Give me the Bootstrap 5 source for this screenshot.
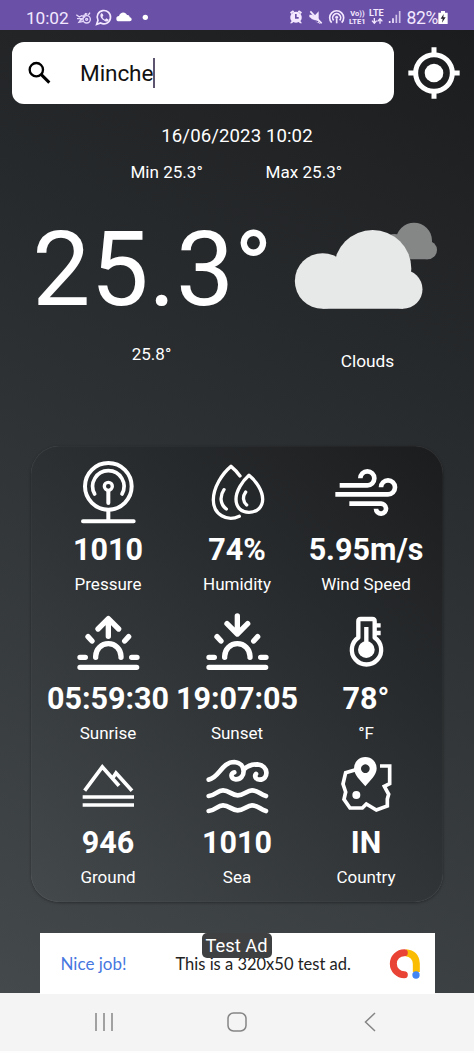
<!DOCTYPE html>
<html lang="en">
<head>
<meta charset="utf-8">
<meta name="viewport" content="width=device-width, initial-scale=1">
<title>Weather</title>
<link href="https://cdn.jsdelivr.net/npm/bootstrap@5.3.0/dist/css/bootstrap.min.css" rel="stylesheet">
<style>
body{font-family:Roboto,"Noto Sans",sans-serif;background:#fdfdfd;color:#fff;height:1053px;overflow:hidden}
svg{display:block;flex:none}
.status{height:30px;background:#6a50a7;padding:6px 25px 0 26px;color:#f3e8ff}
.clock{font-size:17.3px;line-height:24px;width:44px;white-space:nowrap;letter-spacing:-.1px}
.pct{font-size:17.5px;line-height:24px;white-space:nowrap;letter-spacing:-.3px}
.app{height:963px;background:linear-gradient(26deg,#44494c,#2d3133 52%,#1b1c1e)}
.topbar{padding:12px 14px 0 12px;height:74px}
.search{width:382px;height:62px;border-radius:12px;background:#fff;color:#111;padding-left:16px}
.query{font-size:22.6px;line-height:30px;margin-left:29px;padding-top:2px;letter-spacing:-.1px}
.caret{width:2px;height:30px;background:#5d5470}
.date{font-size:18.6px;line-height:28px;margin-top:18px;letter-spacing:.1px}
.range{font-size:17.1px;line-height:26px;margin-top:9px;padding:0 101.5px 0 98px}
.now{height:260px}
.reading{width:303px}
.temp{font-size:103.5px;line-height:110px;margin-top:30px;white-space:nowrap;padding-left:2px}
.feels{font-size:17px;line-height:26px;margin-top:16px}
.outlook{width:129px;padding-top:25px}
.outlook svg{margin-left:5px}
.sky{font-size:17.3px;line-height:26px;margin-top:28px}
.panel{width:412px;height:456px;margin:1px auto 0;padding:0 12px;border-radius:28px;background:linear-gradient(42deg,#44494c,#2d3133 52%,#1b1c1e);box-shadow:0 1px 3px rgba(0,0,0,.35),inset 0 0 1px rgba(255,255,255,.25)}
.cell{width:129px;flex:none}
.value{font-size:30.5px;font-weight:700;line-height:36px;white-space:nowrap}
.label{font-size:17px;line-height:28px;margin-top:2px}
.lower{padding-top:.7px}
.ln{fill:none;stroke:#fff;stroke-width:12;stroke-linecap:round;stroke-linejoin:round}
.ad{width:395px;height:61px;background:#fff;margin:31px auto 0;font-family:Lato,sans-serif;color:#222;padding:1px 14px 0 21px}
.adtag{top:0;left:162px;width:70px;height:25px;border-radius:5px;background:#3f4041;color:#fff;font:18.3px/25px Roboto,sans-serif;text-align:center;white-space:nowrap}
.nice{font-size:17px;line-height:20px;color:#4677df;width:115px}
.msg{font-size:16.5px;line-height:16px;white-space:nowrap}
.navkeys{height:58px;background:#f4f4f4;padding:0 71px 0 70px}
</style>
</head>
<body>
<div class="status d-flex">
  <div class="clock">10:02</div>
  <svg class="ms-1" width="90" height="24" viewBox="222 18 270 72">
    <g fill="none" stroke="#e5d8fa" stroke-width="4"><path d="M229 44l9 7 7-4 11 4M231 56h13l-7 11 13-3M242 62l12-13"/><circle cx="260" cy="58" r="11"/><circle cx="260" cy="58" r="3"/><path d="M250 47l12-6M265 45l5-7M258 43l-3-3"/></g>
    <path d="M290 73l4-12a20 20 0 1 1 8 8z" fill="none" stroke="#f3e8ff" stroke-width="5"/><path d="M303 41c3-3 6 2 7 6l-3 4q3 6 8 8l4-4 7 4c-2 9-10 6-16 1s-12-12-7-19" fill="#f3e8ff"/>
    <path d="M357 64a8 8 0 0 1 0-16c3-13 20-14 24-3 6-1 8 4 8 7 8 1 8 12 0 12z" fill="#fff"/><circle cx="436" cy="52" r="8" fill="#fff"/>
  </svg>
  <svg class="ms-auto" width="114" height="24" viewBox="147 18 342 72" fill="none" stroke="#f3e8ff" overflow="visible">
    <g transform="translate(5)">
    <path fill="#f3e8ff" fill-rule="evenodd" stroke="none" d="M148 37l9-6 4 4-9 8zM184 37l-9-6-4 4 9 8zM166 35a17 17 0 0 1 13 28l5 7h-6l-4-4a17 17 0 0 1-16 0l-4 4h-6l5-7a17 17 0 0 1 13-28M163 42v14h11v-5h-6v-9z"/>
    <path fill="#f3e8ff" stroke="none" d="M206 44h9l5 5 14-15v32l4 4v2L206 51zM210 56h6l16 14v-7z"/><path d="M209 34l34 36" stroke="#f3e8ff" stroke-width="5"/>
    <path d="M273 68a21 21 0 1 1 30 0M279 61a12 12 0 1 1 18 0" stroke-width="5"/><circle cx="288" cy="52" r="4" fill="#f3e8ff"/><path d="M288 56v14" stroke-width="5"/>
    <g fill="#f3e8ff" stroke="none" font-family="Roboto" font-weight="700"><text x="329" y="48" font-size="22" textLength="43" lengthAdjust="spacingAndGlyphs">Vo))</text><text x="325" y="71" font-size="23" textLength="50" lengthAdjust="spacingAndGlyphs">LTE1</text><text x="385" y="49" font-size="25" textLength="44" lengthAdjust="spacingAndGlyphs">LTE</text></g>
    <path d="M401 54v15M394 62l7 8 7-8M418 71V56M411 64l7-8 7 8" stroke-width="4"/>
    <path d="M447 69v-6M457 69V55" stroke-width="5"/><path d="M467 69V44M477 69V33" stroke-width="5" opacity=".75"/>
    </g>
  </svg>
  <div class="pct ms-1">82%</div>
  <svg width="11" height="24" viewBox="605 18 33 72"><path fill="#fff" d="M614 33h12v5h8v34h-28V38h8z"/><path d="M622 42l-9 14h6l-2 12 11-16h-7z" fill="#26222d"/></svg>
</div>

<main class="app">
  <div class="topbar d-flex">
    <div class="search d-flex align-items-center">
      <svg width="23" height="24" viewBox="84 182 69 72"><circle cx="109" cy="208" r="20" fill="none" stroke="#000" stroke-width="7"/><path d="M124 223l24 24" stroke="#000" stroke-width="9"/></svg>
      <div class="query">Minche</div><div class="caret"></div>
    </div>
    <svg class="ms-auto" width="52" height="62" viewBox="512 126 156 186" fill="none" stroke="#fff"><circle cx="590" cy="219" r="55" stroke-width="15"/><circle cx="590" cy="219" r="28" fill="#fff" stroke="none"/><path d="M590 142v24M590 272v24M513 219h24M643 219h24" stroke-width="15"/></svg>
  </div>
  <div class="date text-center">16/06/2023 10:02</div>
  <div class="range d-flex"><div class="w-50 text-center">Min 25.3°</div><div class="w-50 text-center">Max 25.3°</div></div>
  <div class="now d-flex">
    <div class="reading d-flex flex-column align-items-center"><div class="temp">25.3°</div><div class="feels">25.8°</div></div>
    <div class="outlook d-flex flex-column align-items-center">
      <svg width="180" height="110" viewBox="0 0 540 330">
        <g fill="#858787"><circle cx="402" cy="92" r="54"/><circle cx="443" cy="120" r="28"/><circle cx="343" cy="110" r="38"/><path d="M343 100h100v48H343z"/></g>
        <g fill="#e7e8e8"><circle cx="128" cy="213" r="83.500"/><circle cx="278" cy="176" r="116"/><circle cx="369" cy="238" r="58.500"/><path d="M128 176h241v120.500H128z"/></g>
      </svg>
      <div class="sky">Clouds</div>
    </div>
  </div>

  <section class="panel">
    <div class="d-flex justify-content-center text-center">
      <div class="cell"><svg width="129" height="86" viewBox="41 18 387 258"><g class="ln"><circle cx="234" cy="139" r="70"/><path d="M193 162A47 47 0 1 1 275 162" stroke-width="11"/><circle cx="234" cy="139" r="12" stroke-width="10"/><path d="M234 153v36M234 210v31M158 244h152" stroke-width="12"/></g></svg><div class="value">1010</div><div class="label">Pressure</div></div>
      <div class="cell"><svg width="129" height="86" viewBox="428 18 387 258"><g class="ln" style="stroke-width:10"><path d="M629 108Q618 92 602 79C575 101 549 143 549 180C549 224 590 246 627 229"/><path d="M656 106C636 124 617 152 617 178C617 203 634 217 656 217S697 203 697 178C697 152 678 124 656 106Z"/><path d="M581 149C567 169 570 194 588 207M646 156C636 170 638 186 649 195"/></g></svg><div class="value">74%</div><div class="label">Humidity</div></div>
      <div class="cell"><svg width="129" height="86" viewBox="185 18 387 258"><path fill="none" stroke="#fff" stroke-width="14" d="M298 136H381A21 21 0 1 0 360 115M285 163H443A21 21 0 1 0 422 142M327 191H420A15 15 0 1 1 407 206"/></svg><div class="value">5.95m/s</div><div class="label">Wind Speed</div></div>
    </div>
    <div class="d-flex justify-content-center text-center">
      <div class="cell"><svg width="129" height="83" viewBox="41 -6 387 249"><g class="ln" style="stroke-width:16"><path d="M149 202h170M149 172h16M304 172h16M196 172v-3a38 38 0 0 1 76 0v3M173 110l12 13M295 110l-12 13M234 109V57M203 87l31-31 31 31"/></g></svg><div class="value">05:59:30</div><div class="label">Sunrise</div></div>
      <div class="cell"><svg width="129" height="83" viewBox="428 -6 387 249"><g class="ln" style="stroke-width:16"><path d="M536 202h170M536 172h16M691 172h16M583 172v-3a38 38 0 0 1 76 0v3M560 110l12 13M682 110l-12 13M621 48v51M590 71l31 31 31-31"/></g></svg><div class="value">19:07:05</div><div class="label">Sunset</div></div>
      <div class="cell"><svg width="129" height="83" viewBox="185 -6 387 249"><g class="ln" style="stroke-width:13"><path d="M354 113V64q0-7 7-7h35q7 0 7 7v49A44 44 0 1 1 354 113z"/><circle cx="378" cy="149" r="25" fill="#fff" stroke="none"/><path d="M378 81v48M407 76h14M407 99h14" stroke-linecap="butt"/></g></svg><div class="value">78°</div><div class="label">°F</div></div>
    </div>
    <div class="lower d-flex justify-content-center text-center">
      <div class="cell"><svg width="129" height="77" viewBox="41 -7 387 231"><path fill="none" stroke="#fff" stroke-width="11" d="M163 121L216 50 266 106M246 85L257 68 305 121M157 140H311M157 164H311"/></svg><div class="value">946</div><div class="label">Ground</div></div>
      <div class="cell"><svg width="129" height="77" viewBox="428 -7 387 231"><g class="ln" style="stroke-width:14"><path d="M535 88C566 84 574 35 612 35C650 38 647 88 616 87C600 86 600 67 612 66M642 56C655 43 668 42 681 42C716 45 716 88 688 88C675 88 672 76 677 71M535 137C556 135 561 120 578 120C597 120 604 135 622 135C640 135 650 120 665 120C684 120 688 132 707 137M535 182C556 180 561 165 578 165C597 165 604 180 622 180C640 180 650 165 665 165C684 165 688 177 707 182"/></g></svg><div class="value">1010</div><div class="label">Sea</div></div>
      <div class="cell"><svg width="129" height="77" viewBox="185 -7 387 231"><path fill="none" stroke="#fff" stroke-width="11" d="M346 58L316 67 308 101 316 125 311 147 329 173H366L378 161 408 179 441 167V146L445 132 432 108 448 100V47H419"/><path fill="#fff" fill-rule="evenodd" d="M375 108C359 89 341 74 341 54A34 34 0 0 1 409 54C409 74 391 89 375 108M375 42a13 13 0 1 0 .1 0"/><circle cx="348" cy="134" r="12" fill="#fff"/></svg><div class="value">IN</div><div class="label">Country</div></div>
    </div>
  </section>

  <div class="ad d-flex align-items-center position-relative">
    <div class="nice">Nice job!</div><div class="msg">This is a 320x50 test ad.</div>
    <svg class="ms-auto" width="32" height="32" viewBox="453 83 96 96" fill="none" stroke-linecap="round" stroke-width="21"><path d="M503 97Q533 99 535 130V155" stroke="#fbbc04" stroke-linecap="butt"/><path d="M499 97A33 33 0 0 0 499 163" stroke="#e94335"/><circle cx="534" cy="164" r="11" fill="#4285f4" stroke="none"/></svg>
    <div class="adtag position-absolute">Test Ad</div>
  </div>
</main>
<nav class="navkeys d-flex justify-content-between align-items-center">
  <svg width="66" height="20" viewBox="0 0 66 20" stroke="#858585" stroke-width="1.500"><path d="M26 1v18M34 1v18M42 1v18"/></svg>
  <svg width="66" height="20" viewBox="0 0 66 20" fill="none" stroke="#858585" stroke-width="1.500"><rect x="24" y="1" width="18" height="18" rx="5.500"/></svg>
  <svg width="66" height="20" viewBox="0 0 66 20" fill="none" stroke="#858585" stroke-width="1.500"><path d="M38 1l-9.500 9L38 19"/></svg>
</nav>
<script src="https://cdn.jsdelivr.net/npm/bootstrap@5.3.0/dist/js/bootstrap.bundle.min.js"></script>
</body>
</html>
